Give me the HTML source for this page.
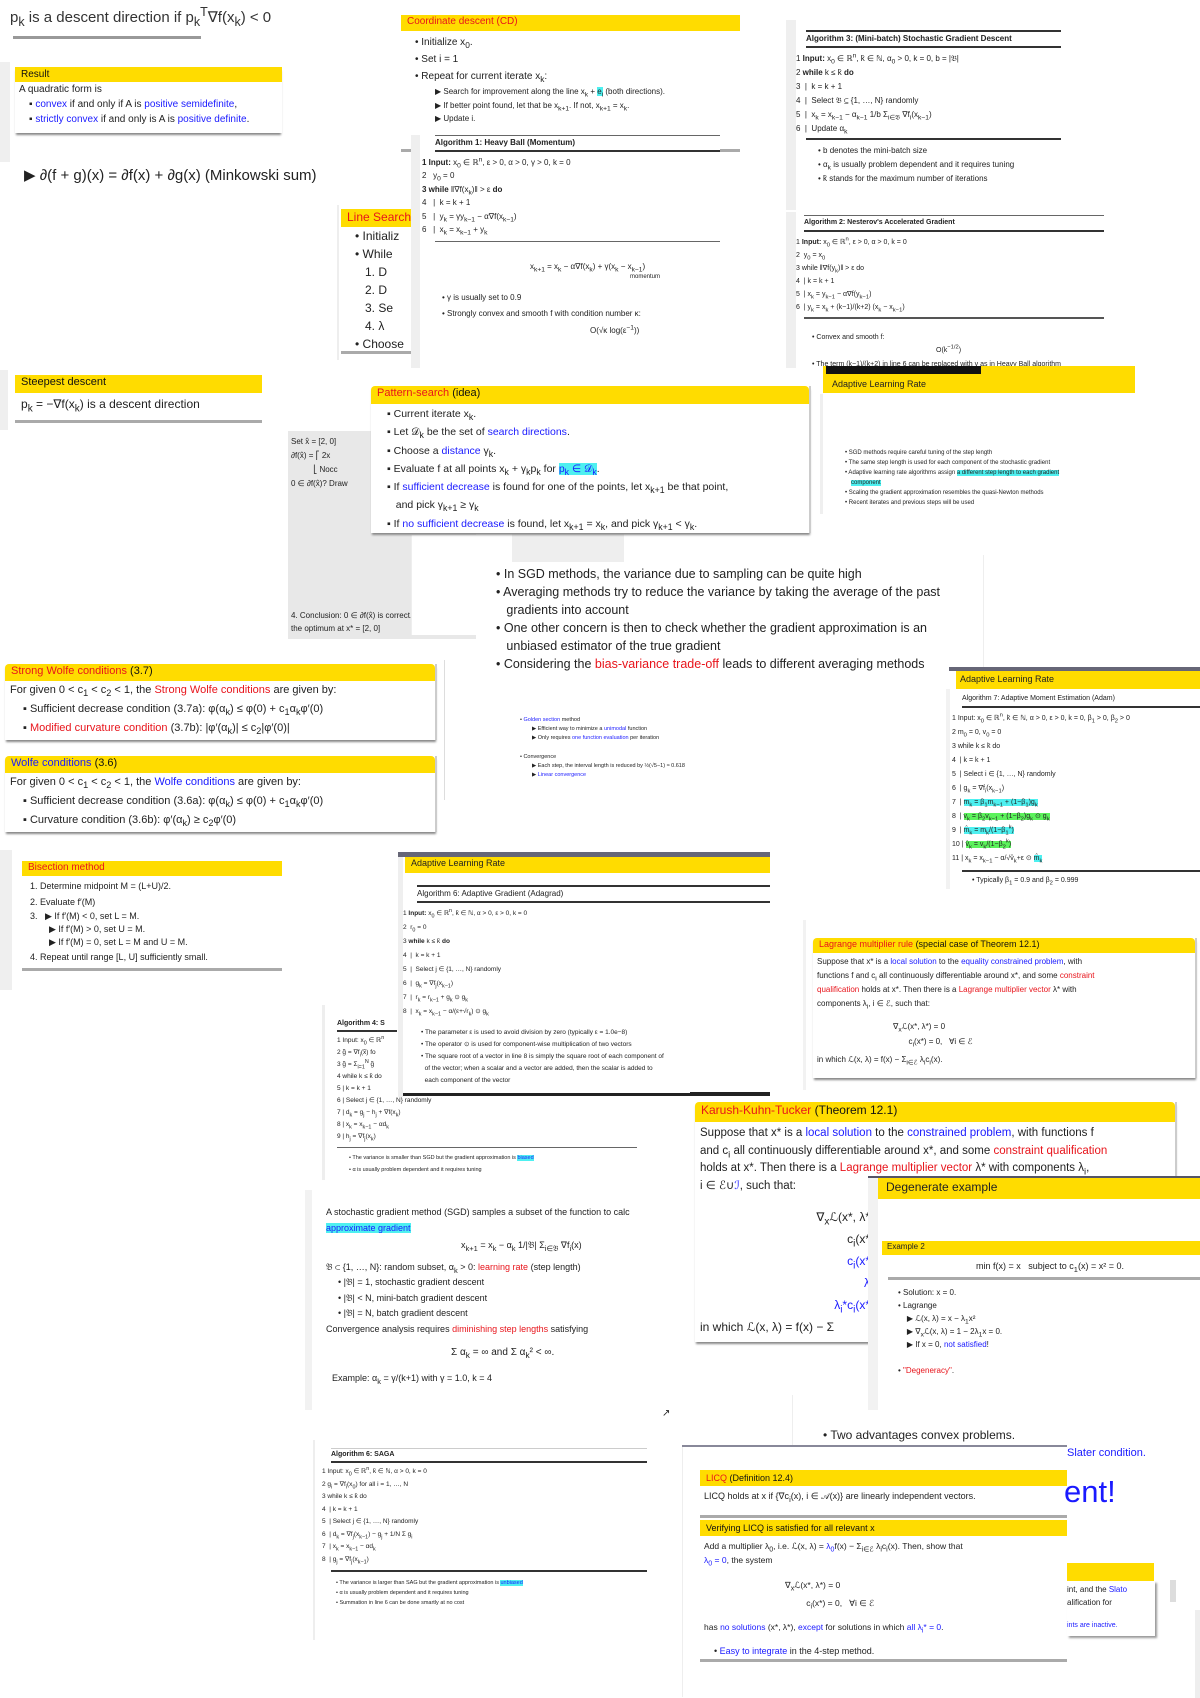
<!DOCTYPE html>
<html><head><meta charset="utf-8">
<style>
*{margin:0;padding:0;box-sizing:border-box}
sub,sup{line-height:0}
body{width:1200px;height:1698px;position:relative;background:#fff;font-family:"Liberation Sans",sans-serif;color:#222;overflow:hidden}
.a{position:absolute}
.h{background:#ffdc00;color:#111;padding:1px 6px;white-space:nowrap;overflow:hidden}
.r{color:#e8141b}.bl{color:#1a1aff}.cy{background:#4ef0f0}.gr{background:#5cf25c}
.sh{box-shadow:0 3px 2px -1px #888}
.g{background:#efefef}
.t{font-size:10px;line-height:15px;white-space:nowrap;overflow:hidden}
.s{font-size:8px;line-height:13.5px;white-space:nowrap;overflow:hidden}
</style></head><body>

<div class="a t" style="left:10px;top:7px;font-size:15px;line-height:22px;color:#333">p<sub>k</sub> is a descent direction if p<sub>k</sub><sup>T</sup>∇f(x<sub>k</sub>) &lt; 0</div>
<div class="a" style="left:13px;top:36px;width:188px;height:3px;background:#999"></div>

<div class="a g" style="left:0;top:62px;width:10px;height:100px"></div>
<div class="a sh" style="left:15px;top:67px;width:267px;height:66px;background:#fff">
 <div class="h" style="font-size:10px;height:15px;line-height:13px">Result</div>
 <div class="t" style="padding-left:4px">A quadratic form is</div>
 <div class="t" style="padding-left:14px">▪ <span class="bl">convex</span> if and only if A is <span class="bl">positive semidefinite</span>,</div>
 <div class="t" style="padding-left:14px">▪ <span class="bl">strictly convex</span> if and only is A is <span class="bl">positive definite</span>.</div>
</div>

<div class="a" style="left:24px;top:166px;font-size:15px;white-space:nowrap">▶ ∂(f + g)(x) = ∂f(x) + ∂g(x) (Minkowski sum)</div>

<div class="a" style="left:401px;top:15px;width:339px;height:137px;border-bottom:3px solid #aaa">
 <div class="h r" style="font-size:10px;height:16px;color:#e8141b">Coordinate descent (CD)</div>
 <div class="t" style="padding-left:14px;margin-top:3px;line-height:17px">• Initialize x<sub>0</sub>.</div>
 <div class="t" style="padding-left:14px;line-height:17px">• Set i = 1</div>
 <div class="t" style="padding-left:14px;line-height:17px">• Repeat for current iterate x<sub>k</sub>:</div>
 <div class="s" style="padding-left:34px">▶ Search for improvement along the line x<sub>k</sub> + <span class="cy">e<sub>i</sub></span> (both directions).</div>
 <div class="s" style="padding-left:34px">▶ If better point found, let that be x<sub>k+1</sub>. If not, x<sub>k+1</sub> = x<sub>k</sub>.</div>
 <div class="s" style="padding-left:34px">▶ Update i.</div>
</div>

<div class="a" style="left:337px;top:205px;width:2px;height:155px;background:#eee"></div>
<div class="a" style="left:341px;top:209px;width:75px;height:145px;border-bottom:3px solid #aaa;overflow:hidden">
 <div class="h r" style="font-size:12px;height:18px;color:#e8141b">Line Search</div>
 <div style="font-size:12px;line-height:18px;padding-left:14px;white-space:nowrap">• Initializ<br>• While<br>&nbsp;&nbsp;&nbsp;1. D<br>&nbsp;&nbsp;&nbsp;2. D<br>&nbsp;&nbsp;&nbsp;3. Se<br>&nbsp;&nbsp;&nbsp;4. λ<br>• Choose</div>
</div>

<div class="a g" style="left:411px;top:135px;width:9px;height:233px"></div>
<div class="a" style="left:420px;top:135px;width:300px;height:233px;background:#fff">
 <div style="margin-left:15px;width:285px;border-top:1px solid #666"></div>
 <div class="s" style="margin-left:15px;font-weight:bold;border-bottom:2px solid #333;width:285px">Algorithm 1: Heavy Ball (Momentum)</div>
 <div class="s" style="margin-left:2px;margin-top:4px"><b>1 Input:</b> x<sub>0</sub> ∈ ℝ<sup>n</sup>, ε &gt; 0, α &gt; 0, γ &gt; 0, k = 0</div>
 <div class="s" style="margin-left:2px">2 &nbsp; y<sub>0</sub> = 0</div>
 <div class="s" style="margin-left:2px"><b>3 while</b> ‖∇f(x<sub>k</sub>)‖ &gt; ε <b>do</b></div>
 <div class="s" style="margin-left:2px">4 &nbsp;&nbsp;| &nbsp;k = k + 1</div>
 <div class="s" style="margin-left:2px">5 &nbsp;&nbsp;| &nbsp;y<sub>k</sub> = γy<sub>k−1</sub> − α∇f(x<sub>k−1</sub>)</div>
 <div class="s" style="margin-left:2px">6 &nbsp;&nbsp;| &nbsp;x<sub>k</sub> = x<sub>k−1</sub> + y<sub>k</sub></div>
 <div style="margin-left:15px;width:285px;margin-top:4px;border-top:1px solid #666"></div>
 <div class="s" style="margin-left:110px;margin-top:18px">x<sub>k+1</sub> = x<sub>k</sub> − α∇f(x<sub>k</sub>) + γ(x<sub>k</sub> − x<sub>k−1</sub>)</div>
 <div class="s" style="margin-left:210px;font-size:6px;line-height:8px">momentum</div>
 <div class="s" style="margin-left:22px;margin-top:10px">• γ is usually set to 0.9</div>
 <div class="s" style="margin-left:22px;margin-top:2px">• Strongly convex and smooth f with condition number κ:</div>
 <div class="s" style="margin-left:170px;margin-top:4px">O(√κ log(ε<sup>−1</sup>))</div>
</div>

<div class="a g" style="left:786px;top:20px;width:10px;height:190px"></div>
<div class="a" style="left:796px;top:30px;width:270px;height:180px">
 <div class="s" style="margin-left:10px;font-weight:bold;border-top:2px solid #333;border-bottom:2px solid #333;width:255px">Algorithm 3: (Mini-batch) Stochastic Gradient Descent</div>
 <div class="s" style="margin-top:4px;line-height:14px">1 <b>Input:</b> x<sub>0</sub> ∈ ℝ<sup>n</sup>, k̄ ∈ ℕ, α<sub>0</sub> &gt; 0, k = 0, b = |𝔅|</div>
 <div class="s" style="line-height:14px">2 <b>while</b> k ≤ k̄ <b>do</b></div>
 <div class="s" style="line-height:14px">3 &nbsp;| &nbsp;k = k + 1</div>
 <div class="s" style="line-height:14px">4 &nbsp;| &nbsp;Select 𝔅 ⊆ {1, …, N} randomly</div>
 <div class="s" style="line-height:14px">5 &nbsp;| &nbsp;x<sub>k</sub> = x<sub>k−1</sub> − α<sub>k−1</sub> 1/b Σ<sub>i∈𝔅</sub> ∇f<sub>i</sub>(x<sub>k−1</sub>)</div>
 <div class="s" style="line-height:14px">6 &nbsp;| &nbsp;Update α<sub>k</sub></div>
 <div style="margin-left:10px;width:255px;border-top:2px solid #333;margin-top:2px"></div>
 <div class="s" style="margin-left:22px;margin-top:4px;line-height:14px">• b denotes the mini-batch size</div>
 <div class="s" style="margin-left:22px;line-height:14px">• α<sub>k</sub> is usually problem dependent and it requires tuning</div>
 <div class="s" style="margin-left:22px;line-height:14px">• k̄ stands for the maximum number of iterations</div>
</div>

<div class="a g" style="left:786px;top:212px;width:10px;height:156px"></div>
<div class="a" style="left:796px;top:215px;width:310px;height:150px">
 <div class="s" style="margin-left:8px;font-weight:bold;font-size:7px;border-top:1px solid #666;border-bottom:2px solid #333;width:300px">Algorithm 2: Nesterov's Accelerated Gradient</div>
 <div class="s" style="font-size:7px;margin-top:4px;line-height:13px">1 <b>Input:</b> x<sub>0</sub> ∈ ℝ<sup>n</sup>, ε &gt; 0, α &gt; 0, k = 0</div>
 <div class="s" style="font-size:7px;line-height:13px">2 &nbsp;y<sub>0</sub> = x<sub>0</sub></div>
 <div class="s" style="font-size:7px;line-height:13px">3 while ‖∇f(y<sub>k</sub>)‖ &gt; ε do</div>
 <div class="s" style="font-size:7px;line-height:13px">4 &nbsp;| k = k + 1</div>
 <div class="s" style="font-size:7px;line-height:13px">5 &nbsp;| x<sub>k</sub> = y<sub>k−1</sub> − α∇f(y<sub>k−1</sub>)</div>
 <div class="s" style="font-size:7px;line-height:13px">6 &nbsp;| y<sub>k</sub> = x<sub>k</sub> + (k−1)/(k+2) (x<sub>k</sub> − x<sub>k−1</sub>)</div>
 <div style="margin-left:8px;width:300px;border-top:2px solid #555;margin-top:3px"></div>
 <div class="s" style="font-size:7px;margin-left:16px;margin-top:12px">• Convex and smooth f:</div>
 <div class="s" style="font-size:7px;margin-left:140px">O(k<sup>−1/2</sup>)</div>
 <div class="s" style="font-size:7px;margin-left:16px">• The term (k−1)/(k+2) in line 6 can be replaced with γ as in Heavy Ball algorithm</div>
</div>

<div class="a" style="left:823px;top:366px;width:312px;height:27px;background:#ffdc00"></div>
<div class="a" style="left:826px;top:366px;width:155px;height:8px;background:#111"></div>
<div class="a s" style="left:832px;top:378px;font-size:9px;line-height:12px">Adaptive Learning Rate</div>
<div class="a g" style="left:820px;top:394px;width:3px;height:120px"></div>
<div class="a" style="left:845px;top:448px;font-size:6px;line-height:10px;white-space:nowrap">
 <div>• SGD methods require careful tuning of the step length</div>
 <div>• The same step length is used for each component of the stochastic gradient</div>
 <div>• Adaptive learning rate algorithms assign <span class="cy">a different step length to each gradient</span></div>
 <div style="padding-left:6px"><span class="cy">component</span></div>
 <div>• Scaling the gradient approximation resembles the quasi-Newton methods</div>
 <div>• Recent iterates and previous steps will be used</div>
</div>

<div class="a g" style="left:0;top:370px;width:8px;height:60px"></div>
<div class="a" style="left:15px;top:375px;width:247px;height:48px;border-bottom:3px solid #aaa">
 <div class="h" style="font-size:11px;height:18px">Steepest descent</div>
 <div style="font-size:12px;padding:4px 6px;white-space:nowrap">p<sub>k</sub> = −∇f(x<sub>k</sub>) is a descent direction</div>
</div>

<div class="a g" style="left:288px;top:431px;width:188px;height:208px;background:#e8e8e8">
 <div class="s" style="padding:4px 3px;line-height:14px">Set x̂ = [2, 0]<br>∂f(x̂) = ⎡ 2x<br>&nbsp;&nbsp;&nbsp;&nbsp;&nbsp;&nbsp;&nbsp;&nbsp;&nbsp;&nbsp;⎣ Nocc<br>0 ∈ ∂f(x̂)? Draw</div>
 <div class="s" style="position:absolute;left:3px;top:178px;line-height:13px">4. Conclusion: 0 ∈ ∂f(x̂) is correct. B<br>the optimum at x* = [2, 0]</div>
</div>
<div class="a" style="left:411px;top:535px;width:90px;height:100px;background:#fff;border-left:1px solid #eee"></div>
<div class="a" style="left:512px;top:532px;width:112px;height:30px;background:#eee"></div>

<div class="a sh" style="left:371px;top:386px;width:440px;height:147px;background:#fff;border-right:2px solid #ccc;overflow:hidden">
 <div class="h" style="font-size:11px;height:18px;border-radius:4px 4px 0 0"><span class="r">Pattern-search</span> (idea)</div>
 <div style="font-size:10.5px;line-height:18.3px;padding-left:16px;padding-top:1px;white-space:nowrap">
 ▪ Current iterate x<sub>k</sub>.<br>
 ▪ Let 𝒟<sub>k</sub> be the set of <span class="bl">search directions</span>.<br>
 ▪ Choose a <span class="bl">distance</span> γ<sub>k</sub>.<br>
 ▪ Evaluate f at all points x<sub>k</sub> + γ<sub>k</sub>p<sub>k</sub> for <span class="cy" style="color:#1a1aff">p<sub>k</sub> ∈ 𝒟<sub>k</sub></span>.<br>
 ▪ If <span class="bl">sufficient decrease</span> is found for one of the points, let x<sub>k+1</sub> be that point,<br>
 &nbsp;&nbsp;&nbsp;and pick γ<sub>k+1</sub> ≥ γ<sub>k</sub><br>
 ▪ If <span class="bl">no sufficient decrease</span> is found, let x<sub>k+1</sub> = x<sub>k</sub>, and pick γ<sub>k+1</sub> &lt; γ<sub>k</sub>.
 </div>
</div>

<div class="a" style="left:983px;top:555px;width:1px;height:120px;background:#eee"></div>
<div class="a" style="left:496px;top:565px;font-size:12.5px;line-height:18px;white-space:nowrap;color:#222">
 <div>• In SGD methods, the variance due to sampling can be quite high</div>
 <div>• Averaging methods try to reduce the variance by taking the average of the past</div>
 <div>&nbsp;&nbsp;&nbsp;gradients into account</div>
 <div>• One other concern is then to check whether the gradient approximation is an</div>
 <div>&nbsp;&nbsp;&nbsp;unbiased estimator of the true gradient</div>
 <div>• Considering the <span class="r">bias-variance trade-off</span> leads to different averaging methods</div>
</div>

<div class="a sh" style="left:5px;top:664px;width:432px;height:76px;background:#fff;border-right:2px solid #ccc">
 <div class="h" style="font-size:11px;height:17px;border-radius:4px 4px 0 0"><span class="r">Strong Wolfe conditions</span> (3.7)</div>
 <div class="t" style="font-size:11px;line-height:19px;padding-left:5px">For given 0 &lt; c<sub>1</sub> &lt; c<sub>2</sub> &lt; 1, the <span class="r">Strong Wolfe conditions</span> are given by:</div>
 <div class="t" style="font-size:11px;line-height:19px;padding-left:18px">▪ Sufficient decrease condition (3.7a): φ(α<sub>k</sub>) ≤ φ(0) + c<sub>1</sub>α<sub>k</sub>φ′(0)</div>
 <div class="t" style="font-size:11px;line-height:19px;padding-left:18px">▪ <span class="r">Modified curvature condition</span> (3.7b): |φ′(α<sub>k</sub>)| ≤ c<sub>2</sub>|φ′(0)|</div>
</div>
<div class="a sh" style="left:5px;top:756px;width:432px;height:76px;background:#fff;border-right:2px solid #ccc">
 <div class="h" style="font-size:11px;height:17px;border-radius:4px 4px 0 0"><span class="bl">Wolfe conditions</span> (3.6)</div>
 <div class="t" style="font-size:11px;line-height:19px;padding-left:5px">For given 0 &lt; c<sub>1</sub> &lt; c<sub>2</sub> &lt; 1, the <span class="bl">Wolfe conditions</span> are given by:</div>
 <div class="t" style="font-size:11px;line-height:19px;padding-left:18px">▪ Sufficient decrease condition (3.6a): φ(α<sub>k</sub>) ≤ φ(0) + c<sub>1</sub>α<sub>k</sub>φ′(0)</div>
 <div class="t" style="font-size:11px;line-height:19px;padding-left:18px">▪ Curvature condition (3.6b): φ′(α<sub>k</sub>) ≥ c<sub>2</sub>φ′(0)</div>
</div>
<div class="a" style="left:444px;top:660px;width:1px;height:140px;background:#ddd"></div>

<div class="a" style="left:520px;top:716px;font-size:5.5px;line-height:9px;white-space:nowrap">
 <div>• <span class="bl">Golden section</span> method</div>
 <div style="padding-left:12px">▶ Efficient way to minimize a <span class="bl">unimodal</span> function</div>
 <div style="padding-left:12px">▶ Only requires <span class="bl">one function evaluation</span> per iteration</div>
 <div style="margin-top:10px">• Convergence</div>
 <div style="padding-left:12px">▶ Each step, the interval length is reduced by ½(√5−1) ≈ 0.618</div>
 <div style="padding-left:12px">▶ <span class="bl">Linear convergence</span></div>
</div>

<div class="a" style="left:949px;top:667px;width:251px;height:4px;background:#667"></div>
<div class="a" style="left:956px;top:671px;width:244px;height:18px;background:#ffdc00"><div class="s" style="padding:2px 4px;font-size:9px;line-height:12px">Adaptive Learning Rate</div></div>
<div class="a" style="left:946px;top:689px;width:4px;height:200px;background:#f2f2f2"></div>
<div class="a" style="left:952px;top:692px;width:248px;height:196px">
 <div class="s" style="margin-left:10px;font-size:7px;border-bottom:2px solid #333;width:240px">Algorithm 7: Adaptive Moment Estimation (Adam)</div>
 <div class="s" style="font-size:7px;margin-top:4px;line-height:14px">1 Input: x<sub>0</sub> ∈ ℝ<sup>n</sup>, k̄ ∈ ℕ, α &gt; 0, ε &gt; 0, k = 0, β<sub>1</sub> &gt; 0, β<sub>2</sub> &gt; 0</div>
 <div class="s" style="font-size:7px;line-height:14px">2 m<sub>0</sub> = 0, v<sub>0</sub> = 0</div>
 <div class="s" style="font-size:7px;line-height:14px">3 while k ≤ k̄ do</div>
 <div class="s" style="font-size:7px;line-height:14px">4 &nbsp;| k = k + 1</div>
 <div class="s" style="font-size:7px;line-height:14px">5 &nbsp;| Select i ∈ {1, …, N} randomly</div>
 <div class="s" style="font-size:7px;line-height:14px">6 &nbsp;| g<sub>k</sub> = ∇f<sub>i</sub>(x<sub>k−1</sub>)</div>
 <div class="s" style="font-size:7px;line-height:14px">7 &nbsp;| <span class="cy">m<sub>k</sub> = β<sub>1</sub>m<sub>k−1</sub> + (1−β<sub>1</sub>)g<sub>k</sub></span></div>
 <div class="s" style="font-size:7px;line-height:14px">8 &nbsp;| <span class="gr">v<sub>k</sub> = β<sub>2</sub>v<sub>k−1</sub> + (1−β<sub>2</sub>)g<sub>k</sub> ⊙ g<sub>k</sub></span></div>
 <div class="s" style="font-size:7px;line-height:14px">9 &nbsp;| <span class="cy">m̂<sub>k</sub> = m<sub>k</sub>/(1−β<sub>1</sub><sup>k</sup>)</span></div>
 <div class="s" style="font-size:7px;line-height:14px">10 | <span class="gr">v̂<sub>k</sub> = v<sub>k</sub>/(1−β<sub>2</sub><sup>k</sup>)</span></div>
 <div class="s" style="font-size:7px;line-height:14px">11 | x<sub>k</sub> = x<sub>k−1</sub> − α/√v̂<sub>k</sub>+ε ⊙ <span class="cy">m̂<sub>k</sub></span></div>
 <div style="margin-left:10px;width:240px;border-top:2px solid #333;margin-top:4px"></div>
 <div class="s" style="font-size:7px;margin-left:20px;margin-top:2px">• Typically β<sub>1</sub> = 0.9 and β<sub>2</sub> = 0.999</div>
</div>

<div class="a g" style="left:0;top:850px;width:12px;height:140px"></div>
<div class="a" style="left:22px;top:861px;width:260px;height:110px;border-bottom:3px solid #aaa">
 <div class="h r" style="font-size:10px;height:15px;color:#e8141b">Bisection method</div>
 <div class="s" style="font-size:9px;line-height:16px;padding-left:8px;margin-top:2px">1. Determine midpoint M = (L+U)/2.</div>
 <div class="s" style="font-size:9px;line-height:16px;padding-left:8px">2. Evaluate f′(M)</div>
 <div class="s" style="font-size:9px;line-height:13px;padding-left:8px">3. &nbsp;&nbsp;▶ If f′(M) &lt; 0, set L = M.</div>
 <div class="s" style="font-size:9px;line-height:13px;padding-left:27px">▶ If f′(M) &gt; 0, set U = M.</div>
 <div class="s" style="font-size:9px;line-height:13px;padding-left:27px">▶ If f′(M) = 0, set L = M and U = M.</div>
 <div class="s" style="font-size:9px;line-height:16px;padding-left:8px">4. Repeat until range [L, U] sufficiently small.</div>
</div>

<div class="a" style="left:322px;top:1005px;width:3px;height:175px;background:#eee"></div>
<div class="a" style="left:337px;top:1010px;width:310px;height:170px;background:#fff">
 <div class="s" style="font-size:7px;font-weight:bold;border-bottom:2px solid #333;width:60px;margin-top:8px;line-height:12px">Algorithm 4: S</div>
 <div class="s" style="font-size:6.5px;line-height:12px;margin-top:3px">1 Input: x<sub>0</sub> ∈ ℝ<sup>n</sup><br>2 g̃ = ∇f<sub>i</sub>(x̃) fo<br>3 g̃ = Σ<sub>i=1</sub><sup>N</sup> g̃<br>4 while k ≤ k̄ do<br>5 | k = k + 1<br>6 | Select j ∈ {1, …, N} randomly<br>7 | d<sub>k</sub> = g<sub>j</sub> − h<sub>j</sub> + ∇f(x<sub>k</sub>)<br>8 | x<sub>k</sub> = x<sub>k−1</sub> − αd<sub>k</sub><br>9 | h<sub>j</sub> = ∇f<sub>j</sub>(x<sub>k</sub>)</div>
 <div style="width:300px;border-top:1px solid #666;margin-top:4px"></div>
 <div class="s" style="font-size:5.5px;margin-left:12px;margin-top:4px;line-height:12px">• The variance is smaller than SGD but the gradient approximation is <span class="cy" style="color:#1a1aff">biased</span></div>
 <div class="s" style="font-size:5.5px;margin-left:12px;line-height:12px">• α is usually problem dependent and it requires tuning</div>
</div>

<div class="a" style="left:398px;top:852px;width:372px;height:5px;background:#667"></div>
<div class="a g" style="left:398px;top:857px;width:5px;height:240px"></div>
<div class="a" style="left:403px;top:857px;width:367px;height:239px;background:#fff;border-bottom:3px solid #222;overflow:hidden">
 <div style="background:#ffdc00;height:16px;margin-left:2px;line-height:12px" class="s"><span style="padding-left:6px;font-size:9px">Adaptive Learning Rate</span></div>
 <div class="s" style="margin-left:14px;margin-top:12px;font-size:8px;border-top:2px solid #333;border-bottom:2px solid #333;width:353px">Algorithm 6: Adaptive Gradient (Adagrad)</div>
 <div class="s" style="font-size:6.5px;line-height:14px;margin-top:4px">1 <b>Input:</b> x<sub>0</sub> ∈ ℝ<sup>n</sup>, k̄ ∈ ℕ, α &gt; 0, ε &gt; 0, k = 0<br>2 &nbsp;r<sub>0</sub> = 0<br>3 <b>while</b> k ≤ k̄ <b>do</b><br>4 &nbsp;| &nbsp;k = k + 1<br>5 &nbsp;| &nbsp;Select j ∈ {1, …, N} randomly<br>6 &nbsp;| &nbsp;g<sub>k</sub> = ∇f<sub>j</sub>(x<sub>k−1</sub>)<br>7 &nbsp;| &nbsp;r<sub>k</sub> = r<sub>k−1</sub> + g<sub>k</sub> ⊙ g<sub>k</sub><br>8 &nbsp;| &nbsp;x<sub>k</sub> = x<sub>k−1</sub> − α/(ε+√r<sub>k</sub>) ⊙ g<sub>k</sub></div>
 <div class="s" style="font-size:6.5px;line-height:12px;margin-left:18px;margin-top:8px">• The parameter ε is used to avoid division by zero (typically ε = 1.0e−8)<br>• The operator ⊙ is used for component-wise multiplication of two vectors<br>• The square root of a vector in line 8 is simply the square root of each component of<br>&nbsp;&nbsp;of the vector; when a scalar and a vector are added, then the scalar is added to<br>&nbsp;&nbsp;each component of the vector</div>
</div>

<div class="a" style="left:803px;top:920px;width:3px;height:170px;background:#f2f2f2"></div>
<div class="a sh" style="left:813px;top:938px;width:384px;height:140px;background:#fff;border-right:2px solid #ccc">
 <div class="h" style="font-size:9px;height:15px;border-radius:4px 4px 0 0"><span class="r">Lagrange multiplier rule</span> (special case of Theorem 12.1)</div>
 <div style="font-size:8px;line-height:14px;padding:2px 4px;white-space:nowrap">Suppose that x* is a <span class="bl">local solution</span> to the <span class="bl">equality constrained problem</span>, with<br>functions f and c<sub>i</sub> all continuously differentiable around x*, and some <span class="r">constraint</span><br><span class="r">qualification</span> holds at x*. Then there is a <span class="r">Lagrange multiplier vector</span> λ* with<br>components λ<sub>i</sub>, i ∈ ℰ, such that:</div>
 <div style="font-size:8px;line-height:15px;padding-left:80px;margin-top:6px;white-space:nowrap">∇<sub>x</sub>ℒ(x*, λ*) = 0<br>&nbsp;&nbsp;&nbsp;&nbsp;&nbsp;&nbsp;&nbsp;c<sub>i</sub>(x*) = 0, &nbsp;&nbsp;∀i ∈ ℰ</div>
 <div style="font-size:8px;padding:6px 4px;white-space:nowrap">in which ℒ(x, λ) = f(x) − Σ<sub>i∈ℰ</sub> λ<sub>i</sub>c<sub>i</sub>(x).</div>
</div>

<div class="a" style="left:690px;top:1092px;width:80px;height:3px;background:#222"></div>
<div class="a sh" style="left:695px;top:1102px;width:482px;height:240px;background:#fff;border-right:2px solid #ccc">
 <div class="h" style="font-size:12px;height:20px;border-radius:4px 4px 0 0"><span class="r">Karush-Kuhn-Tucker</span> (Theorem 12.1)</div>
 <div style="font-size:11.5px;line-height:17.5px;padding:3px 5px;white-space:nowrap">Suppose that x* is a <span class="bl">local solution</span> to the <span class="bl">constrained problem</span>, with functions f<br>and c<sub>i</sub> all continuously differentiable around x*, and some <span class="r">constraint qualification</span><br>holds at x*. Then there is a <span class="r">Lagrange multiplier vector</span> λ* with components λ<sub>i</sub>,<br>i ∈ ℰ∪<span class="bl">ℐ</span>, such that:</div>
 <div style="font-size:12px;line-height:22px;text-align:right;width:175px;white-space:nowrap;margin-top:8px">∇<sub>x</sub>ℒ(x*, λ*<br>c<sub>i</sub>(x*<br><span class="bl">c<sub>i</sub>(x*</span><br><span class="bl">λ</span><br><span class="bl">λ<sub>i</sub>*c<sub>i</sub>(x*</span></div>
 <div style="font-size:12px;padding:4px 5px;white-space:nowrap">in which ℒ(x, λ) = f(x) − Σ</div>
</div>

<div class="a" style="left:868px;top:1178px;width:10px;height:232px;background:#f2f2f2"></div>
<div class="a" style="left:868px;top:1176px;width:332px;height:2px;background:#556"></div>
<div class="a" style="left:878px;top:1178px;width:322px;height:232px;background:#fff">
 <div style="background:#ffdc00;height:21px;font-size:12px;padding:2px 8px;white-space:nowrap">Degenerate example</div>
 <div style="background:#ffdc00;height:14px;font-size:8px;padding:1px 5px;margin:42px 0 0 4px">Example 2</div>
 <div style="font-size:9px;padding:6px 0 6px 88px;white-space:nowrap;border-bottom:3px solid #aaa;margin-left:10px">min f(x) = x &nbsp;&nbsp;subject to c<sub>1</sub>(x) = x² = 0.</div>
 <div style="font-size:8px;line-height:13px;padding:6px 20px;white-space:nowrap">• Solution: x = 0.<br>• Lagrange<br>&nbsp;&nbsp;&nbsp;&nbsp;▶ ℒ(x, λ) = x − λ<sub>1</sub>x²<br>&nbsp;&nbsp;&nbsp;&nbsp;▶ ∇<sub>x</sub>ℒ(x, λ) = 1 − 2λ<sub>1</sub>x = 0.<br>&nbsp;&nbsp;&nbsp;&nbsp;▶ If x = 0, <span class="bl">not satisfied</span>!<br><br>• <span class="r">"Degeneracy"</span>.</div>
</div>

<div class="a" style="left:305px;top:1190px;width:7px;height:220px;background:#f2f2f2"></div>
<div class="a" style="left:326px;top:1197px;width:356px;height:212px;background:#fff;font-size:9px;line-height:15.5px;white-space:nowrap;overflow:hidden">
 <div style="margin-top:8px">A stochastic gradient method (SGD) samples a subset of the function to calc</div>
 <div><span class="cy" style="color:#1a1aff">approximate gradient</span></div>
 <div style="padding-left:135px;margin-top:2px">x<sub>k+1</sub> = x<sub>k</sub> − α<sub>k</sub> 1/|𝔅| Σ<sub>i∈𝔅</sub> ∇f<sub>i</sub>(x)</div>
 <div style="margin-top:6px">𝔅 ⊂ {1, …, N}: random subset, α<sub>k</sub> &gt; 0: <span class="r">learning rate</span> (step length)</div>
 <div style="padding-left:12px">• |𝔅| = 1, stochastic gradient descent</div>
 <div style="padding-left:12px">• |𝔅| &lt; N, mini-batch gradient descent</div>
 <div style="padding-left:12px">• |𝔅| = N, batch gradient descent</div>
 <div>Convergence analysis requires <span class="r">diminishing step lengths</span> satisfying</div>
 <div style="padding-left:125px;margin-top:8px;font-size:10px">Σ α<sub>k</sub> = ∞ and Σ α<sub>k</sub>² &lt; ∞.</div>
 <div style="padding-left:6px;margin-top:10px">Example: α<sub>k</sub> = γ/(k+1) with γ = 1.0, k = 4</div>
</div>
<div class="a" style="left:662px;top:1408px;font-size:10px">↗</div>

<div class="a" style="left:313px;top:1440px;width:2px;height:200px;background:#eee"></div>
<div class="a" style="left:322px;top:1448px;width:325px;height:190px;background:#fff">
 <div class="s" style="margin-left:9px;font-size:7px;font-weight:bold;border-top:1px solid #ccc;border-bottom:2px solid #333;width:316px;line-height:12px">Algorithm 6: SAGA</div>
 <div class="s" style="font-size:6.5px;line-height:12.5px;margin-top:3px">1 Input: x<sub>0</sub> ∈ ℝ<sup>n</sup>, k̄ ∈ ℕ, α &gt; 0, k = 0<br>2 g<sub>i</sub> = ∇f<sub>i</sub>(x<sub>0</sub>) for all i = 1, …, N<br>3 while k ≤ k̄ do<br>4 &nbsp;| k = k + 1<br>5 &nbsp;| Select j ∈ {1, …, N} randomly<br>6 &nbsp;| d<sub>k</sub> = ∇f<sub>j</sub>(x<sub>k−1</sub>) − g<sub>j</sub> + 1/N Σ g<sub>i</sub><br>7 &nbsp;| x<sub>k</sub> = x<sub>k−1</sub> − αd<sub>k</sub><br>8 &nbsp;| g<sub>j</sub> = ∇f<sub>j</sub>(x<sub>k−1</sub>)</div>
 <div style="margin-left:9px;width:316px;border-top:2px solid #333;margin-top:4px"></div>
 <div class="s" style="font-size:5.5px;line-height:10px;margin-left:14px;margin-top:6px">• The variance is larger than SAG but the gradient approximation is <span class="cy" style="color:#1a1aff">unbiased</span><br>• α is usually problem dependent and it requires tuning<br>• Summation in line 6 can be done smartly at no cost</div>
</div>

<div class="a" style="left:792px;top:1395px;width:1px;height:50px;background:#eee"></div>
<div class="a" style="left:823px;top:1428px;font-size:12px;white-space:nowrap">• Two advantages convex problems.</div>
<div class="a" style="left:682px;top:1445px;width:385px;height:2px;background:#889"></div>
<div class="a" style="left:682px;top:1447px;width:8px;height:250px;background:#fff;border-left:1px solid #eee"></div>
<div class="a" style="left:1067px;top:1447px;font-size:11px;white-space:nowrap;color:#1a1aff">Slater condition.</div>
<div class="a" style="left:1064px;top:1474px;font-size:31px;color:#1a1aff;white-space:nowrap">ent!</div>
<div class="a" style="left:1067px;top:1563px;width:87px;height:18px;background:#ffdc00"></div>
<div class="a" style="left:1067px;top:1581px;width:88px;height:55px;box-shadow:2px 2px 2px #999;font-size:8px;line-height:13px;padding:2px 0;white-space:nowrap;overflow:hidden">int, and the <span class="bl">Slato</span><br>alification for</div>
<div class="a" style="left:1067px;top:1622px;font-size:7px;color:#1a1aff;white-space:nowrap">ints are inactive.</div>
<div class="a" style="left:1170px;top:1580px;width:6px;height:22px;background:#ddd"></div>
<div class="a" style="left:1195px;top:1610px;width:5px;height:88px;background:#eee"></div>

<div class="a" style="left:700px;top:1470px;width:367px;height:48px;border-bottom:3px solid #aaa">
 <div class="h" style="font-size:9px;height:16px;line-height:14px"><span class="r">LICQ</span> (Definition 12.4)</div>
 <div style="font-size:9px;padding:5px 4px;white-space:nowrap">LICQ holds at x if {∇c<sub>i</sub>(x), i ∈ 𝒜(x)} are linearly independent vectors.</div>
</div>
<div class="a" style="left:700px;top:1520px;width:367px;height:142px;border-bottom:3px solid #aaa">
 <div class="h" style="font-size:9px;height:16px;line-height:14px">Verifying LICQ is satisfied for all relevant x</div>
 <div style="font-size:8.5px;line-height:14px;padding:3px 4px;white-space:nowrap">Add a multiplier λ<sub>0</sub>, i.e. ℒ(x, λ) = <span class="bl">λ<sub>0</sub></span>f(x) − Σ<sub>i∈ℰ</sub> λ<sub>i</sub>c<sub>i</sub>(x). Then, show that<br><span class="bl">λ<sub>0</sub> = 0</span>, the system</div>
 <div style="font-size:8.5px;line-height:18px;padding-left:85px;margin-top:6px;white-space:nowrap">∇<sub>x</sub>ℒ(x*, λ*) = 0<br>&nbsp;&nbsp;&nbsp;&nbsp;&nbsp;&nbsp;&nbsp;&nbsp;&nbsp;c<sub>i</sub>(x*) = 0, &nbsp;&nbsp;∀i ∈ ℰ</div>
 <div style="font-size:8.5px;padding:10px 4px 0;white-space:nowrap">has <span class="bl">no solutions</span> (x*, λ*), <span class="bl">except</span> for solutions in which <span class="bl">all λ<sub>i</sub>* = 0</span>.</div>
</div>
<div class="a" style="left:714px;top:1646px;font-size:9px;white-space:nowrap">• <span class="bl">Easy to integrate</span> in the 4-step method.</div>

</body></html>
